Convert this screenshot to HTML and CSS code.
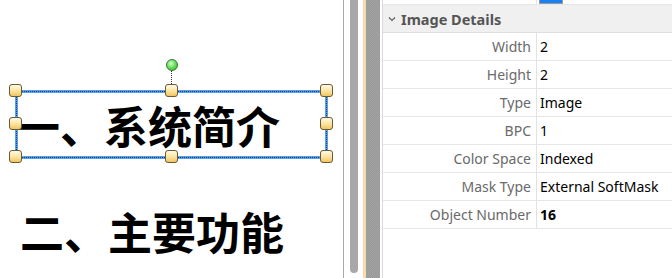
FILE: index.html
```html
<!DOCTYPE html>
<html lang="zh">
<head>
<meta charset="utf-8">
<link rel="stylesheet" href="styles.css">
</head>
<body>
<div class="app">
  <div class="canvas">
    <div class="heading h1">一、系统简介</div>
    <div class="heading h2">二、主要功能</div>
    <div class="selection">
      <span class="rot-line"></span>
      <span class="rot"></span>
      <span class="hd tl"></span><span class="hd tc"></span><span class="hd tr"></span>
      <span class="hd ml"></span><span class="hd mr"></span>
      <span class="hd bl"></span><span class="hd bc"></span><span class="hd br"></span>
    </div>
  </div>
  <div class="vscroll"><div class="thumb"></div></div>
  <div class="accent"></div>
  <div class="splitter"></div>
  <div class="gap"></div>
  <div class="panel">
    <div class="row partial"><div class="lbl"></div><div class="val"><span class="swatch"></span></div></div>
    <div class="group">
      <svg class="chev" width="8" height="6" viewBox="0 0 8 6"><path d="M1 1.5 L4 4.5 L7 1.5" fill="none" stroke="#606060" stroke-width="1.2"/></svg>
      <span>Image Details</span>
    </div>
    <div class="row"><div class="lbl">Width</div><div class="val">2</div></div>
    <div class="row"><div class="lbl">Height</div><div class="val">2</div></div>
    <div class="row"><div class="lbl">Type</div><div class="val">Image</div></div>
    <div class="row"><div class="lbl">BPC</div><div class="val">1</div></div>
    <div class="row"><div class="lbl">Color Space</div><div class="val">Indexed</div></div>
    <div class="row"><div class="lbl">Mask Type</div><div class="val">External SoftMask</div></div>
    <div class="row"><div class="lbl">Object Number</div><div class="val bold">16</div></div>
  </div>
</div>
</body>
</html>
```

FILE: styles.css
```css
* { box-sizing: border-box; }
html, body { margin: 0; padding: 0; background: #fff; }
.app { display: flex; width: 672px; height: 278px; overflow: hidden; }

.canvas {
  position: relative;
  width: 343px;
  flex: none;
  background: #fff;
  padding-left: 16px;
  font-family: "Noto Sans CJK SC", sans-serif;
  font-weight: 700;
  color: #000;
}
.heading { font-size: 44px; line-height: 44px; height: 44px; letter-spacing: 0; white-space: nowrap; }
.h1 { margin-top: 103px; }
.h2 { margin-top: 62px; padding-left: 4px; }

.selection {
  position: absolute;
  left: 15px; top: 90px;
  width: 313px; height: 69px;
  border: 3px solid #55a0f0;
}
.selection::before {
  content: "";
  position: absolute;
  inset: -2px;
  border: 1px dotted #2a3a50;
}
.hd {
  position: absolute;
  width: 13px; height: 13px;
  border: 1px solid #6b5a30;
  border-radius: 3px;
  background: linear-gradient(#fffbe6, #fbe3a0 55%, #f2c560);
}
.tl { left: -9px; top: -9px; }
.tc { left: 147px; top: -9px; }
.tr { left: 302px; top: -9px; }
.ml { left: -9px; top: 24px; }
.mr { left: 302px; top: 24px; }
.bl { left: -9px; top: 57px; }
.bc { left: 147px; top: 57px; }
.br { left: 302px; top: 57px; }
.rot {
  position: absolute;
  left: 148px; top: -34px;
  width: 12px; height: 12px;
  border-radius: 50%;
  border: 1px solid #2f7a2f;
  background: radial-gradient(circle at 40% 35%, #d8ffd0, #6fe060 45%, #2faa2f);
}
.rot-line {
  position: absolute;
  left: 153px; top: -22px;
  width: 1px; height: 13px;
  border-left: 1px dotted #333;
}

.vscroll { width: 20px; flex: none; border-left: 1px solid #a9a9a9; padding-left: 6px; background: #fff; }
.thumb { width: 8px; height: 273px; background: #a8a8a8; border-radius: 0 0 4px 4px; }
.accent { width: 3px; flex: none; background: #f5dca8; }
.splitter {
  width: 14px; flex: none;
  background-color: #a4a4a4;
  background-image:
    linear-gradient(45deg, #989898 25%, transparent 25%, transparent 75%, #989898 75%),
    linear-gradient(45deg, #989898 25%, transparent 25%, transparent 75%, #989898 75%);
  background-size: 2px 2px;
  background-position: 0 0, 1px 1px;
}
.gap { width: 2px; flex: none; background: #fff; }

.panel {
  flex: 1;
  border-left: 1px solid #d9d9d9;
  font-family: "Noto Sans", sans-serif;
  font-size: 14px;
  background: #fff;
}
.row { display: flex; height: 28px; border-bottom: 1px solid #e6e6e6; align-items: center; }
.row.partial { height: 5px; align-items: flex-start; }
.lbl {
  width: 154px; flex: none; height: 100%;
  border-right: 1px solid #e2e2e2;
  text-align: right; padding-right: 5px;
  color: #6a6a6a;
  display: flex; align-items: center; justify-content: flex-end;
}
.val { padding-left: 3px; color: #000; }
.bold { font-weight: 700; }
.swatch {
  display: block;
  width: 24px; height: 4px;
  margin-left: -1px;
  border: 1px solid #9a9a9a; border-top: none;
  background: #1a7ff0;
}
.group {
  height: 28px;
  background: #f0f0f0;
  border-bottom: 1px solid #dedede;
  display: flex; align-items: center;
  padding-left: 5px;
  font-weight: 700; font-size: 14.5px;
  color: #555;
}
.chev { margin-right: 5px; margin-top: 1px; }
```
